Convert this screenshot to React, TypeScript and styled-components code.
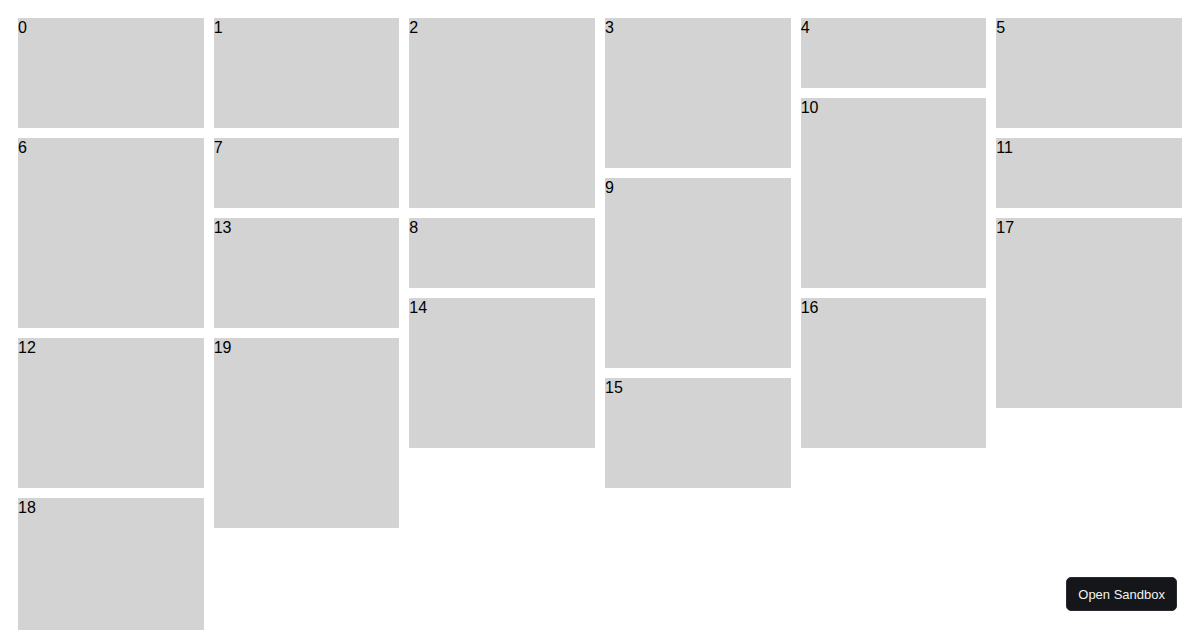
import React from "react";
import styled, { createGlobalStyle } from "styled-components";

const GlobalStyle = createGlobalStyle`
  html, body {
    margin: 0;
    padding: 0;
    overflow: hidden;
    background: #fff;
    font-family: "Liberation Sans", Arial, sans-serif;
  }
`;

const Page = styled.div`
  padding: 18px;
`;

const Masonry = styled.div`
  display: flex;
  gap: 10px;
  align-items: flex-start;
`;

const Column = styled.div`
  flex: 1;
  display: flex;
  flex-direction: column;
  gap: 10px;
  min-width: 0;
`;

const Tile = styled.div<{ $h: number }>`
  box-sizing: border-box;
  height: ${(p) => p.$h}px;
  padding-top: 1px;
  background: lightgray;
  color: #000;
  font-size: 16px;
  line-height: 18px;
`;

const SandboxButton = styled.button`
  position: fixed;
  right: 23px;
  bottom: 19px;
  height: 34px;
  padding: 0 11px;
  border: 1px solid #2a2b30;
  border-radius: 5px;
  background: #151619;
  color: #f2f2f2;
  font-family: "Liberation Sans", Arial, sans-serif;
  font-size: 13px;
  line-height: 34px;
  cursor: pointer;
`;

const heights = [
  110, 110, 190, 150, 70, 110, 190, 70, 70, 190, 190, 70, 150, 110, 150, 110,
  150, 190, 150, 190,
];

const COLS = 6;

const App = () => {
  const columns: number[][] = Array.from({ length: COLS }, () => []);
  heights.forEach((_, i) => columns[i % COLS].push(i));

  return (
    <Page>
      <GlobalStyle />
      <Masonry>
        {columns.map((col, c) => (
          <Column key={c}>
            {col.map((i) => (
              <Tile key={i} $h={heights[i]}>
                {i}
              </Tile>
            ))}
          </Column>
        ))}
      </Masonry>
      <SandboxButton>Open Sandbox</SandboxButton>
    </Page>
  );
};

export default App;
